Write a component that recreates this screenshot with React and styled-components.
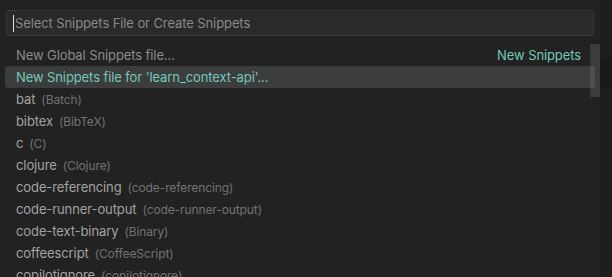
import React from 'react';
import styled, { createGlobalStyle } from 'styled-components';

const GlobalStyle = createGlobalStyle`
  html, body {
    margin: 0;
    padding: 0;
    background: #1e1e1e;
    overflow: hidden;
  }
  body {
    font-family: Inter, "Noto Sans", "Liberation Sans", sans-serif;
  }
`;

const items = [
  { label: 'bat', desc: 'Batch' },
  { label: 'bibtex', desc: 'BibTeX' },
  { label: 'c', desc: 'C' },
  { label: 'clojure', desc: 'Clojure' },
  { label: 'code-referencing', desc: 'code-referencing' },
  { label: 'code-runner-output', desc: 'code-runner-output' },
  { label: 'code-text-binary', desc: 'Binary' },
  { label: 'coffeescript', desc: 'CoffeeScript' },
  { label: 'copilotignore', desc: 'copilotignore' },
];

const App = () => (
  <Page>
    <GlobalStyle />
    <Widget>
      <InputWrap>
        <Caret />
        <Placeholder>Select Snippets File or Create Snippets</Placeholder>
      </InputWrap>
      <List>
        <Row>
          <Label $muted>New Global Snippets file...</Label>
          <GroupLabel>New Snippets</GroupLabel>
        </Row>
        <Row $selected>
          <Label $accent>New Snippets file for 'learn_context-api'...</Label>
        </Row>
        {items.map((item) => (
          <Row key={item.label}>
            <Label>{item.label}</Label>
            <Desc>({item.desc})</Desc>
          </Row>
        ))}
        <Thumb />
      </List>
    </Widget>
    <Backdrop>
      <LineHighlight />
    </Backdrop>
  </Page>
);

const Page = styled.div`
  display: flex;
  width: 612px;
  height: 277px;
  overflow: hidden;
`;

const Widget = styled.div`
  width: 600px;
  flex-shrink: 0;
  height: 100%;
  overflow: hidden;
  background: #222222;
  border-top-right-radius: 6px;
  display: flex;
  flex-direction: column;
`;

const InputWrap = styled.div`
  flex-shrink: 0;
  margin: 10px 6px 0 6px;
  height: 26px;
  box-sizing: border-box;
  border: 1px solid #383838;
  border-radius: 2px;
  background: #2a2a2a;
  display: flex;
  align-items: center;
  padding-left: 6px;
`;

const Caret = styled.span`
  width: 1px;
  height: 17px;
  background: #e0e0e0;
  margin-right: 1px;
`;

const Placeholder = styled.span`
  color: #888888;
  font-size: 13px;
  letter-spacing: -0.1px;
`;

const List = styled.div`
  flex-shrink: 0;
  position: relative;
  margin-top: 8px;
  display: flex;
  flex-direction: column;
`;

const Row = styled.div`
  flex-shrink: 0;
  height: 22px;
  margin: 0 5px;
  padding: 0 14px 0 11px;
  display: flex;
  align-items: center;
  border-radius: 3px;
  background: ${(p) => (p.$selected ? '#3c3e3d' : 'transparent')};
  font-size: 13px;
  letter-spacing: -0.1px;
  white-space: nowrap;
`;

const Label = styled.span`
  color: ${(p) => (p.$accent ? '#74c7bb' : p.$muted ? '#8a8a8a' : '#a3a3a3')};
`;

const Desc = styled.span`
  color: #727272;
  font-size: 12px;
  margin-left: 6px;
`;

const GroupLabel = styled.span`
  margin-left: auto;
  color: #74c7bb;
`;

const Thumb = styled.div`
  position: absolute;
  top: 0;
  right: 0;
  width: 10px;
  height: 53px;
  background: rgba(121, 121, 121, 0.3);
`;

const Backdrop = styled.div`
  flex: 1;
  padding-top: 59px;
`;

const LineHighlight = styled.div`
  height: 29px;
  background: #191919;
`;

export default App;
